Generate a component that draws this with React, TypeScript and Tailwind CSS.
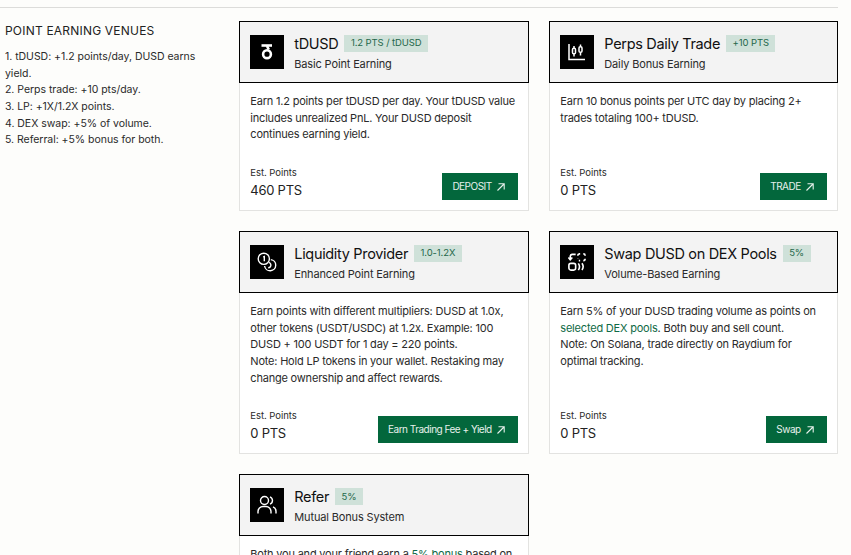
import type { ReactNode } from 'react';

function ArrowIcon() {
  return (
    <svg width="8" height="8" viewBox="0 0 8 8" fill="none" stroke="currentColor" strokeWidth="1.1" className="shrink-0">
      <path d="M0.5 7.5 7 1M1.5 0.8h5.7v5.7" />
    </svg>
  );
}

function DeltaIcon() {
  return (
    <svg width="14" height="16" viewBox="0 0 14 16" fill="none" stroke="#fff" strokeWidth="2.6">
      <path d="M1.5 1.5h10.5" />
      <path d="M7 2 8.8 5.6" />
      <circle cx="7" cy="10.2" r="3.9" />
    </svg>
  );
}

function CandleIcon() {
  return (
    <svg width="18" height="18" viewBox="0 0 18 18" fill="none" stroke="#fff" strokeWidth="1.5">
      <path d="M1 1v15.5h16" />
      <path d="M6 3v2M6 11v2.5M12.5 1.5v2M12.5 9.5v3" />
      <rect x="4.5" y="5.2" width="3" height="5.6" rx="1.3" />
      <rect x="11" y="3.7" width="3" height="5.6" rx="1.3" />
    </svg>
  );
}

function CoinsIcon() {
  return (
    <svg width="20" height="20" viewBox="0 0 20 20" fill="none" stroke="#fff" strokeWidth="1.4">
      <circle cx="6.8" cy="6.8" r="5.6" />
      <path d="M6.2 5.2 7.3 4.6v4.6" />
      <path d="M13.8 7.6a5.6 5.6 0 1 1-6.2 6.4" />
      <path d="M12 10.4a3 3 0 0 1 1.4 4.4 3 3 0 0 1-2.2 1" />
    </svg>
  );
}

function SwapIcon() {
  return (
    <svg width="18" height="18" viewBox="0 0 20 20" fill="none" stroke="#fff" strokeWidth="1.8">
      <path d="M8.5 1.5H4.5a2.5 2.5 0 0 0-2 2.5v3" />
      <path d="M0.5 5 2.5 7.5 4.8 5" />
      <path d="M12 1h1.5M17 1h.2a1.8 1.8 0 0 1 1.8 1.8V3M19 6.5v.3A1.8 1.8 0 0 1 17.2 8.5H17M13.5 8.5H12M11 6.5v-.5M11 3v-.2A1.8 1.8 0 0 1 12 1" />
      <rect x="1" y="11.5" width="7.5" height="7.5" rx="2.2" />
      <path d="M11.5 11.5c1.5 2.2 1.5 5.3 0 7.5M15.5 11.5c1.6 2.2 1.6 5.3 0 7.5" />
    </svg>
  );
}

function UsersIcon() {
  return (
    <svg width="20" height="20" viewBox="0 0 20 20" fill="none" stroke="#fff" strokeWidth="1.4">
      <circle cx="7.5" cy="5.5" r="4" />
      <path d="M1 18.5v-2a5 5 0 0 1 5-5h3a5 5 0 0 1 5 5v2" />
      <path d="M13 1.8a4 4 0 0 1 0 7.4M16 11.8a5 5 0 0 1 3 4.6v2" />
    </svg>
  );
}

type VenueProps = {
  icon: ReactNode;
  title: string;
  badge: string;
  subtitle: string;
  children: ReactNode;
  points?: string;
  action?: string;
};

function VenueCard({ icon, title, badge, subtitle, children, points, action }: VenueProps) {
  return (
    <div className="flex flex-col border border-[#e3e3e1] bg-white">
      <div className="-m-px flex h-[62px] shrink-0 items-center gap-[10px] border border-black bg-[#f3f3f3] px-[10.3px]">
        <div className="flex h-[34px] w-[34px] shrink-0 items-center justify-center bg-black">{icon}</div>
        <div className="mt-[1.5px] flex flex-col gap-[5px]">
          <div className="flex h-[17px] items-center gap-[6px]">
            <span className="whitespace-nowrap text-[14.5px] leading-[17px] tracking-[-0.33px] text-[#111]">{title}</span>
            <span className="flex h-[17px] items-center whitespace-nowrap bg-[#cfe1d9] px-[6.5px] text-[9.5px] tracking-[-0.1px] text-[#24674a]">{badge}</span>
          </div>
          <span className="text-[11px] leading-[14px] tracking-[-0.15px] text-[#2a2a2a]">{subtitle}</span>
        </div>
      </div>
      <div className="flex flex-1 flex-col px-[10.3px] pt-[11px] pb-[10px]">
        <div className="text-[11px] leading-[16.67px] tracking-[-0.2px] text-[#2a2a2a]">{children}</div>
        {action && (
          <div className="mt-auto flex items-end justify-between pt-[23px]">
            <div className="mb-[1.5px] flex flex-col gap-[1.5px]">
              <span className="text-[9.5px] leading-[13px] tracking-[-0.05px] text-[#2a2a2a]">Est. Points</span>
              <span className="text-[13px] leading-[18px] tracking-[-0.25px] text-[#222]">{points}</span>
            </div>
            <button type="button" className="flex h-[27px] items-center gap-[5px] bg-[#03673c] pl-[10px] pr-[13px] text-[10px] tracking-[-0.5px] text-[#e8f1ec]">
              {action}
              <ArrowIcon />
            </button>
          </div>
        )}
      </div>
    </div>
  );
}

export default function App() {
  return (
    <div className="h-screen overflow-hidden bg-[#fdfdfb] font-['Inter',sans-serif]">
      <div className="mt-[7px] mr-[13px] h-px bg-[#dcdcda]" />
      <div className="flex pt-[13px]">
        <aside className="w-[239px] shrink-0 pl-[5px] pr-[30px] pt-[1px] text-[#2a2a2a]">
          <h2 className="text-[12px] leading-[18px] tracking-[0.2px] text-[#222]">POINT EARNING VENUES</h2>
          <p className="mt-[9px] text-[10.5px] leading-[16.67px] tracking-[-0.03px]">
            1. tDUSD: +1.2 points/day, DUSD earns yield.
            <br />
            2. Perps trade: +10 pts/day.
            <br />
            3. LP: +1X/1.2X points.
            <br />
            4. DEX swap: +5% of volume.
            <br />
            5. Referral: +5% bonus for both.
          </p>
        </aside>
        <div className="grid grid-cols-[290px_289px] gap-x-[20px] gap-y-[20px]">
          <VenueCard icon={<DeltaIcon />} title="tDUSD" badge="1.2 PTS / tDUSD" subtitle="Basic Point Earning" points="460 PTS" action="DEPOSIT">
            Earn 1.2 points per tDUSD per day. Your tDUSD value includes unrealized PnL. Your DUSD deposit continues earning yield.
          </VenueCard>
          <VenueCard icon={<CandleIcon />} title="Perps Daily Trade" badge="+10 PTS" subtitle="Daily Bonus Earning" points="0 PTS" action="TRADE">
            Earn 10 bonus points per UTC day by placing 2+ trades totaling 100+ tDUSD.
          </VenueCard>
          <VenueCard icon={<CoinsIcon />} title="Liquidity Provider" badge="1.0-1.2X" subtitle="Enhanced Point Earning" points="0 PTS" action="Earn Trading Fee + Yield">
            Earn points with different multipliers: DUSD at 1.0x, other tokens (USDT/USDC) at 1.2x. Example: 100 DUSD + 100 USDT for 1 day = 220 points.
            <br />
            Note: Hold LP tokens in your wallet. Restaking may change ownership and affect rewards.
          </VenueCard>
          <VenueCard icon={<SwapIcon />} title="Swap DUSD on DEX Pools" badge="5%" subtitle="Volume-Based Earning" points="0 PTS" action="Swap">
            Earn 5% of your DUSD trading volume as points on <span className="text-[#0f6a46]">selected DEX pools</span>. Both buy and sell count.
            <br />
            Note: On Solana, trade directly on Raydium for optimal tracking.
          </VenueCard>
          <VenueCard icon={<UsersIcon />} title="Refer" badge="5%" subtitle="Mutual Bonus System">
            Both you and your friend earn a <span className="text-[#0f6a46]">5% bonus</span> based on
          </VenueCard>
        </div>
      </div>
    </div>
  );
}
